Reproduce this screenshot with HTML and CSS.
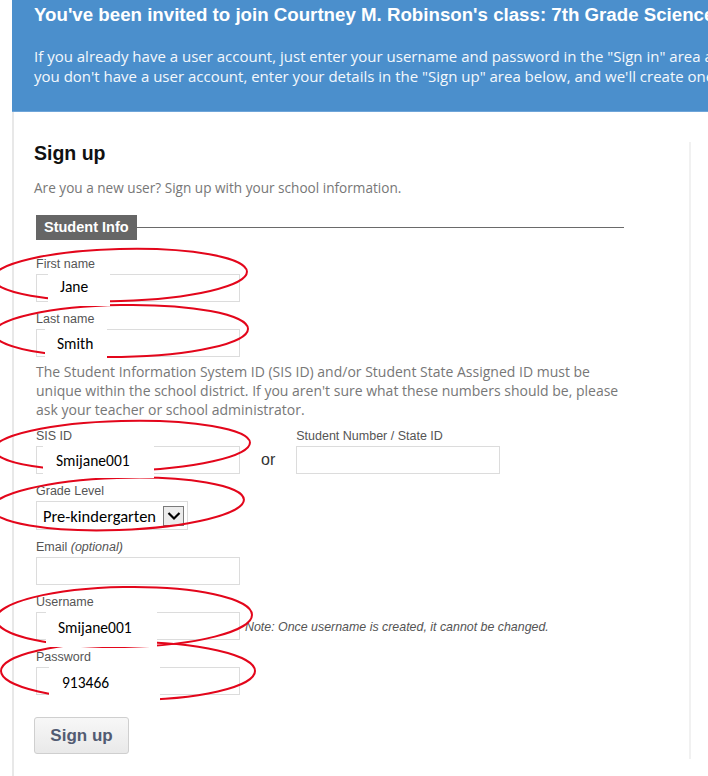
FILE: index.html
```html
<!DOCTYPE html>
<html lang="en">
<head>
<meta charset="utf-8">
<title>Sign up</title>
<link rel="stylesheet" href="styles.css">
</head>
<body>
<div class="page">
  <header class="banner">
    <h1 class="banner-title">You've been invited to join Courtney M. Robinson's class: 7th Grade Science</h1>
    <p class="banner-text">If you already have a user account, just enter your username and password in the "Sign in" area above. If<br>you don't have a user account, enter your details in the "Sign up" area below, and we'll create one for you.</p>
  </header>

  <main class="main">
    <section class="signup">
      <h2 class="signup-title">Sign up</h2>
      <p class="intro">Are you a new user? Sign up with your school information.</p>

      <div class="section-bar">
        <span class="section-tab">Student Info</span>
        <span class="section-line"></span>
      </div>

      <div class="fields">
        <div class="field">
          <label class="field-label">First name</label>
          <input class="text-input" type="text">
        </div>
        <div class="field field-tight">
          <label class="field-label">Last name</label>
          <input class="text-input" type="text">
        </div>

        <p class="help">The Student Information System ID (SIS ID) and/or Student State Assigned ID must be<br>unique within the school district. If you aren't sure what these numbers should be, please<br>ask your teacher or school administrator.</p>

        <div class="row">
          <div class="field">
            <label class="field-label">SIS ID</label>
            <input class="text-input" type="text">
          </div>
          <span class="or">or</span>
          <div class="field">
            <label class="field-label">Student Number / State ID</label>
            <input class="text-input" type="text">
          </div>
        </div>

        <div class="field">
          <label class="field-label">Grade Level</label>
          <div class="select">
            <span class="select-value">Pre-kindergarten</span>
            <span class="select-arrow">
              <svg width="14" height="10" viewBox="0 0 14 10"><path d="M1.5 2 L7 7.5 L12.5 2" fill="none" stroke="#000" stroke-width="2.2"/></svg>
            </span>
          </div>
        </div>

        <div class="field">
          <label class="field-label">Email <em>(optional)</em></label>
          <input class="text-input" type="text">
        </div>

        <div class="row">
          <div class="field">
            <label class="field-label">Username</label>
            <input class="text-input" type="text">
          </div>
          <span class="note">Note: Once username is created, it cannot be changed.</span>
        </div>

        <div class="field">
          <label class="field-label">Password</label>
          <input class="text-input" type="text">
        </div>
      </div>

      <button class="btn" type="button">Sign up</button>
    </section>
    <aside class="side"></aside>
  </main>

  <div class="annot">
    <svg class="rings" width="708" height="776" viewBox="0 0 708 776">
      <g fill="none" stroke="#e3061b" stroke-width="2">
        <ellipse cx="120" cy="275" rx="127" ry="26" transform="rotate(-1.5 120 275)"/>
        <ellipse cx="121" cy="331" rx="127" ry="26" transform="rotate(-1 121 331)"/>
        <ellipse cx="122" cy="446" rx="128" ry="25" transform="rotate(-1.5 122 446)"/>
        <ellipse cx="118" cy="504" rx="126" ry="26" transform="rotate(-2 118 504)"/>
        <ellipse cx="124" cy="617" rx="128" ry="30" transform="rotate(-1 124 617)"/>
        <ellipse cx="128" cy="671" rx="127" ry="29"/>
      </g>
    </svg>
    <div class="patch p-jane">Jane</div>
    <div class="patch p-smith">Smith</div>
    <div class="patch p-sis">Smijane001</div>
    <div class="patch p-user">Smijane001</div>
    <div class="patch p-pass">913466</div>
  </div>
</div>
</body>
</html>
```

FILE: styles.css
```css
html, body {
  margin: 0;
  padding: 0;
  overflow: hidden;
  background: #fff;
}

body {
  font-family: "Liberation Sans", Arial, sans-serif;
  color: #333;
}

.page {
  position: relative;
  width: 708px;
  height: 776px;
  overflow: hidden;
}

/* Banner */
.banner {
  margin-left: 12px;
  height: 112px;
  box-sizing: border-box;
  background: #4b8fcc;
  border-bottom: 1px solid #6ea5d9;
  padding: 5px 0 0 22px;
  color: #fff;
  white-space: nowrap;
  overflow: hidden;
}

.banner-title {
  margin: 0;
  font-size: 18.7px;
  line-height: 20px;
  font-weight: bold;
}

.banner-text {
  margin: 21px 0 0;
  font-family: "Open Sans", "Liberation Sans", sans-serif;
  font-size: 15px;
  line-height: 20px;
  color: #f4f8fc;
}

/* Main */
.main {
  display: flex;
  margin-left: 12px;
  border-left: 2px solid #e8e8e8;
  height: 664px;
}

.signup {
  flex: 0 0 675px;
  box-sizing: border-box;
  padding: 29px 0 0 20px;
}

.side {
  flex: 0 0 auto;
  margin-top: 30px;
  height: 617px;
  border-left: 2px solid #f1f1f1;
}

.signup-title {
  margin: 0;
  font-size: 19.5px;
  line-height: 24px;
  font-weight: bold;
  color: #111;
}

.intro {
  margin: 14px 0 0;
  font-family: "Open Sans", "Liberation Sans", sans-serif;
  font-size: 13.6px;
  line-height: 18px;
  color: #777;
}

.section-bar {
  display: flex;
  align-items: center;
  width: 588px;
  margin: 18px 0 0 2px;
}

.section-tab {
  background: #666;
  color: #fff;
  font-weight: bold;
  font-size: 14.5px;
  line-height: 25px;
  padding: 0 8px;
}

.section-line {
  flex: 1;
  height: 1px;
  background: #6a6a6a;
}

.fields {
  padding-left: 2px;
  margin-top: 17px;
}

.field {
  margin-bottom: 10px;
}

.field-tight {
  margin-bottom: 5px;
}

.field-label {
  display: block;
  font-size: 12.5px;
  line-height: 15px;
  color: #555;
  margin-bottom: 2px;
}

.field-label em {
  font-style: italic;
}

.text-input {
  display: block;
  box-sizing: border-box;
  width: 204px;
  height: 28px;
  margin: 0;
  border: 1px solid #dcdcdc;
  background: #fff;
  padding: 0 6px;
  font: inherit;
}

.help {
  margin: 0 0 10px;
  font-family: "Open Sans", "Liberation Sans", sans-serif;
  font-size: 14px;
  line-height: 19px;
  color: #777;
  white-space: nowrap;
}

.row {
  display: flex;
  align-items: flex-end;
}

.or {
  margin: 0 21px 10px;
  height: 28px;
  line-height: 28px;
  font-size: 16px;
  color: #333;
}

.note {
  margin: 0 0 10px 5px;
  height: 28px;
  line-height: 30px;
  font-size: 12.4px;
  font-style: italic;
  color: #555;
}

.select {
  display: flex;
  align-items: center;
  box-sizing: border-box;
  width: 152px;
  height: 29px;
  border: 1px solid #dcdcdc;
  padding: 0 3px 0 6px;
}

.select-value {
  flex: 1;
  font-family: Carlito, Lato, "Noto Sans", sans-serif;
  font-size: 16.5px;
  color: #000;
  white-space: nowrap;
  overflow: hidden;
}

.select-arrow {
  display: flex;
  align-items: center;
  justify-content: center;
  box-sizing: border-box;
  width: 21px;
  height: 20px;
  border: 1px solid #7a7a7a;
  background: #ececec;
}

.btn {
  display: block;
  margin-top: 22px;
  width: 95px;
  height: 37px;
  box-sizing: border-box;
  border: 1px solid #cfcfcf;
  border-radius: 3px;
  background: linear-gradient(#f7f7f7, #e9e9e9);
  font-family: "Liberation Sans", Arial, sans-serif;
  font-weight: bold;
  font-size: 17px;
  color: #525b72;
  padding: 0;
}

/* Annotation layer */
.annot {
  position: absolute;
  left: 0;
  top: 0;
  width: 708px;
  height: 776px;
  pointer-events: none;
}

.rings {
  position: absolute;
  left: 0;
  top: 0;
}

.patch {
  position: absolute;
  box-sizing: border-box;
  background: #fff;
  font-family: Carlito, Lato, "Noto Sans", sans-serif;
  font-size: 15.5px;
  line-height: 20px;
  color: #000;
  white-space: nowrap;
}

.p-jane  { left: 48px; top: 270px; width: 62px;  height: 36px; padding: 7px 0 0 12px; }
.p-smith { left: 45px; top: 326px; width: 62px;  height: 34px; padding: 8px 0 0 12px; }
.p-sis   { left: 43px; top: 444px; width: 111px; height: 34px; padding: 7px 0 0 13px; }
.p-user  { left: 46px; top: 611px; width: 111px; height: 36px; padding: 7px 0 0 12px; }
.p-pass  { left: 49px; top: 666px; width: 111px; height: 35px; padding: 7px 0 0 13px; }
```
